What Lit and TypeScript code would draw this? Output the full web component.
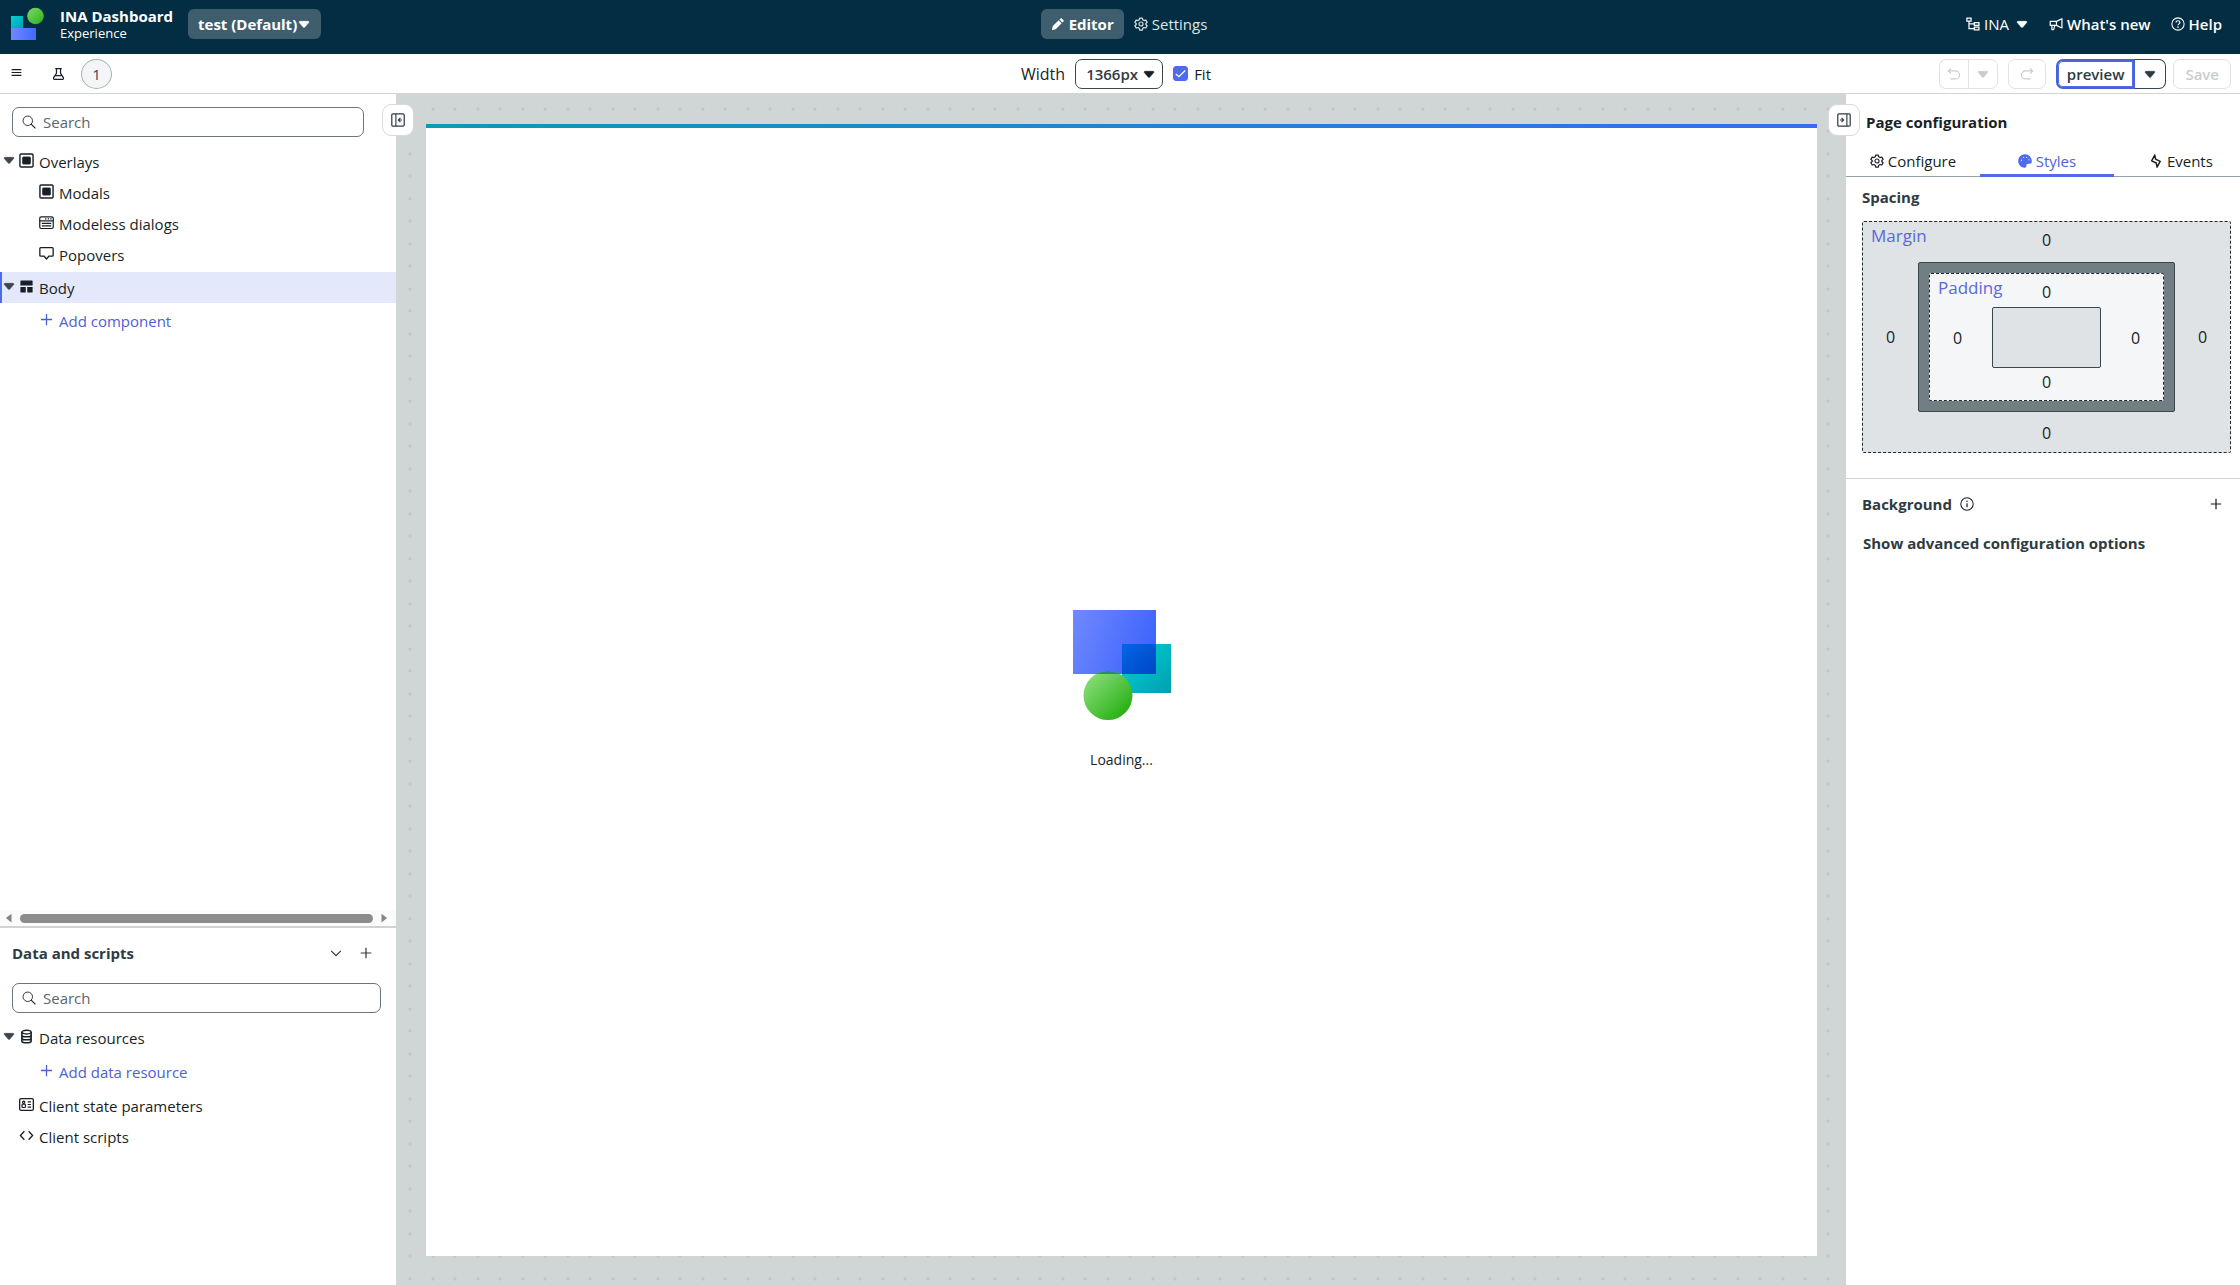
import { LitElement, html, css, svg, nothing } from "lit";
import { customElement, property, state } from "lit/decorators.js";
import { classMap } from "lit/directives/class-map.js";

const shapes: Record<string, unknown> = {
  caret: svg`<path d="M3.4 5h9.2c.8 0 1.200 .8.6 1.400L8.600 11.600a.8.8 0 0 1-1.200 0L2.800 6.400C2.200 5.800 2.600 5 3.400 5z" fill="currentColor"/>`,
  menu: svg`<path d="M2 4.500h12M2 8h12M2 11.500h12" stroke-width="1.500"/>`,
  flask: svg`<path d="M4 1.500h8M5.500 1.500v5.700L2 12.500c-.5.900 0 2 1 2h10c1 0 1.500-1.100 1-2L10.500 7.200V1.500M4 10h8" stroke-width="1.500"/>`,
  search: svg`<circle cx="6.600" cy="6.600" r="5.400"/><path d="M10.500 10.500l4.800 4.800" stroke-width="1.300"/>`,
  overlay: svg`<rect x="1" y="1" width="14" height="14" rx="1.200" stroke-width="1.500"/><rect x="4" y="4.300" width="8" height="7.400" rx=".6" fill="currentColor" stroke-width="1"/>`,
  dialog: svg`<rect x=".8" y="2" width="14.400" height="12.400" rx="1.500" stroke-width="1.300"/><path d="M1 6.300h14" stroke-width="1.300"/><path d="M6.500 4.200h1.400M9.300 4.200h1.400M12.100 4.200h1.400M3 9h10M3 11.700h10" stroke-width="1.300"/>`,
  popover: svg`<path d="M1.800 1.700h12.400c.5 0 .9.400.9.900v7.400c0 .5-.4.900-.9.900h-3.700L8 13.800 5.500 10.900H1.800c-.5 0-.9-.4-.9-.9V2.600c0-.5.400-.9.900-.9z" stroke-width="1.400"/>`,
  body: svg`<path d="M1.500 2.200c0-.5.300-.7.700-.7h11.600c.4 0 .7.300.7.700V7h-13zM1.500 8.600h5.700v5.900h-5c-.4 0-.7-.3-.7-.7zM8.800 8.600h5.700v5.200c0 .4-.3.700-.7.700h-5z" fill="currentColor" stroke="none"/>`,
  plus: svg`<path d="M8 2v12M2 8h12" stroke-width="1.400"/>`,
  chevron: svg`<path d="M2.500 5.500L8 11l5.500-5.500" stroke-width="1.400"/>`,
  database: svg`<ellipse cx="8" cy="3.300" rx="5" ry="2" stroke-width="1.400"/><path d="M3 3.300v9.400c0 1.100 2.200 2 5 2s5-.9 5-2V3.300M3 6.300c0 1.100 2.200 2 5 2s5-.9 5-2M3 9.500c0 1.100 2.200 2 5 2s5-.9 5-2" stroke-width="1.600"/>`,
  parameters: svg`<rect x=".7" y="1.800" width="14.600" height="12.400" rx="1.500" stroke-width="1.400"/><circle cx="5" cy="5.700" r="1.200" stroke-width="1.300"/><rect x="3.200" y="7.700" width="3.700" height="3.500" rx="1" stroke-width="1.300"/><path d="M9.300 5.300h3.500M9.300 8h3.500M9.300 10.800h3.500" stroke-width="1.300"/>`,
  code: svg`<path d="M5.700 3.500L1.500 8l4.200 4.500M10.300 3.500L14.500 8l-4.200 4.500" stroke-width="1.400"/>`,
  pencil: svg`<path d="M10.900 1.700c.4-.4 1-.4 1.400 0l2 2c.4.400.4 1 0 1.400l-1.200 1.200-3.400-3.400zM8.800 3.800l3.400 3.400-6.300 6.300c-.2.200-.4.300-.7.400l-3.500.9c-.4.100-.7-.2-.6-.6l.9-3.500c.1-.3.200-.5.400-.7z" fill="currentColor" stroke="none"/>`,
  gear: svg`<path d="M6.500 1.200h3l.5 2 1.500.9 2-.6 1.500 2.600L13.500 7.500v1.100l1.500 1.400-1.500 2.600-2-.6-1.500.9-.5 2h-3l-.5-2-1.500-.9-2 .6L1 10l1.500-1.400V7.500L1 6.100l1.500-2.600 2 .6L6 3.200z" stroke-width="1.400" stroke-linejoin="round"/><circle cx="8" cy="8" r="2.300" stroke-width="1.300"/>`,
  hierarchy: svg`<path d="M1 1.300h4.800v3.400H1zM9.500 6.300h5.300v3.200H9.500zM9.500 11.600h5.300v3.200H9.500zM3.400 4.700v8.500h6.100M3.400 7.900h6.100" stroke-width="1.400"/>`,
  megaphone: svg`<path d="M14.800 2v10.500L8.500 9.600H1.400V5h7.100zM8.500 5v4.600M3.300 9.600v4.800h2l1.400-4.800" stroke-width="1.400" stroke-linejoin="round"/>`,
  help: svg`<circle cx="8" cy="8" r="7" stroke-width="1.200"/><path d="M5.800 6.400c0-1.300 1-2.100 2.200-2.100s2.200.8 2.200 2c0 1.500-2.200 1.600-2.200 3.200" stroke-width="1.300"/><circle cx="8" cy="11.600" r=".9" fill="currentColor" stroke="none"/>`,
  info: svg`<circle cx="8" cy="8" r="7.100" stroke-width="1.200"/><path d="M8 7v4.600" stroke-width="1.400"/><circle cx="8" cy="4.800" r=".9" fill="currentColor" stroke="none"/>`,
  undo: svg`<path d="M4.600 1.500L1.500 4.500l3.100 3M1.800 4.500h8.100a4.500 4.500 0 0 1 0 9H4" stroke-width="1.300"/>`,
  redo: svg`<path d="M11.400 1.500l3.100 3-3.100 3M14.200 4.500H6.100a4.500 4.500 0 0 0 0 9H12" stroke-width="1.300"/>`,
  palette: svg`<path fill-rule="evenodd" d="M8 .4C3.600.4.200 3.900.200 8s3.300 7.700 7.400 7.700c1.400 0 2-.9 1.900-1.900-.1-1.500.6-2.600 2.200-2.600h1.900c1.300 0 2.200-1 2.200-2.600C15.800 4 12.400.4 8 .4zM3.900 7.700a.7.700 0 1 1 0-1.400.7.700 0 0 1 0 1.400zm2.500-3a.7.700 0 1 1 0-1.400.7.700 0 0 1 0 1.400zm3.500 0a.7.700 0 1 1 0-1.400.7.700 0 0 1 0 1.400zm2.600 2.600a.7.700 0 1 1 0-1.400.7.700 0 0 1 0 1.400z" fill="currentColor" stroke="none"/>`,
  bolt: svg`<path d="M6.600 1.200L3 7.800l5.300 2.500.9 4.700 3.600-6.600-5.300-2.500z" stroke-width="1.700" stroke-linejoin="round"/>`,
  collapse: svg`<rect x=".9" y=".9" width="14.200" height="14.200" rx="1.300" stroke-width="1.400"/><path d="M5.600 1v14" stroke-width="1.300"/><path d="M12.600 8H8.800M10.800 5.600L8.400 8l2.400 2.400" stroke-width="1.300"/>`,
  expand: svg`<rect x=".9" y=".9" width="14.200" height="14.200" rx="1.300" stroke-width="1.400"/><path d="M11.300 1v14" stroke-width="1.300"/><path d="M3.400 8h3.800M5.200 5.600L7.600 8l-2.400 2.400" stroke-width="1.300"/>`,
  check: svg`<path d="M3 8.500l3.300 3L13 4.800" stroke-width="1.300"/>`,
  left: svg`<path d="M12 1v14L3 8z" fill="currentColor" stroke="none"/>`,
  right: svg`<path d="M4 1v14l9-7z" fill="currentColor" stroke="none"/>`,
};

@customElement("ui-icon")
export class UiIcon extends LitElement {
  @property() name = "";

  static styles = css`
    :host {
      display: inline-flex;
      flex: none;
      width: 14px;
      height: 14px;
    }
    .glyph {
      width: 100%;
      height: 100%;
      overflow: visible;
    }
  `;

  render() {
    return html`<svg class="glyph" viewBox="0 0 16 16" fill="none" stroke="currentColor" aria-hidden="true">
      ${shapes[this.name]}
    </svg>`;
  }
}

interface Row {
  label: string;
  icon: string;
  level: 1 | 2;
  open?: boolean;
  selected?: boolean;
  action?: boolean;
  loose?: boolean;
}

const layoutRows: Row[] = [
  { label: "Overlays", icon: "overlay", level: 1, open: true },
  { label: "Modals", icon: "overlay", level: 2 },
  { label: "Modeless dialogs", icon: "dialog", level: 2 },
  { label: "Popovers", icon: "popover", level: 2 },
  { label: "Body", icon: "body", level: 1, open: true, selected: true, loose: true },
  { label: "Add component", icon: "plus", level: 2, action: true, loose: true },
];

const dataRows: Row[] = [
  { label: "Data resources", icon: "database", level: 1, open: true },
  { label: "Add data resource", icon: "plus", level: 2, action: true, loose: true },
  { label: "Client state parameters", icon: "parameters", level: 1, loose: true },
  { label: "Client scripts", icon: "code", level: 1 },
];

@customElement("app-root")
export class AppRoot extends LitElement {
  @state() private fit = true;
  @state() private tab = "Styles";

  static styles = css`
    :host {
      display: flex;
      flex-direction: column;
      min-height: 100vh;
      font: 15px/20px "Open Sans", "Noto Sans", sans-serif;
      color: #181f26;
      background: #fff;
    }
    *,
    *::before {
      box-sizing: border-box;
    }
    button,
    input,
    select {
      font: inherit;
      color: inherit;
      margin: 0;
    }
    button {
      display: inline-flex;
      align-items: center;
      padding: 0;
      border: 0;
      background: none;
      white-space: nowrap;
    }
    .caret {
      width: 14px;
      height: 14px;
    }

    .header {
      display: grid;
      grid-template-columns: minmax(0, 1fr) auto minmax(0, 1fr);
      align-items: center;
      height: 54px;
      padding-bottom: 6px;
      background: #032d42;
      color: #fff;
    }
    .brand {
      display: flex;
      align-items: center;
      gap: 15px;
      padding-left: 11px;
    }
    .logo {
      width: 34px;
      height: 34px;
    }
    .name {
      font-size: 15px;
      line-height: 18px;
      font-weight: 700;
      margin: 0;
    }
    .kind {
      font-size: 13px;
      line-height: 16px;
      margin: 0;
    }
    .pill {
      height: 30px;
      padding: 0 10px;
      border-radius: 6px;
      background: #3e5e6e;
      font-weight: 700;
    }
    .nav {
      display: flex;
      padding-left: 18px;
    }
    .nav .item,
    .account .item {
      gap: 4px;
      height: 30px;
    }
    .nav .plain {
      padding: 0 10px;
      color: #dfe5e8;
    }
    .item {
      display: inline-flex;
      align-items: center;
      color: #fff;
      text-decoration: none;
      white-space: nowrap;
    }
    .account {
      display: flex;
      justify-content: flex-end;
      gap: 20px;
      padding-right: 18px;
    }
    .account .caret {
      margin-left: 2px;
    }
    .strong {
      font-weight: 600;
    }

    .toolbar {
      display: grid;
      grid-template-columns: minmax(0, 1fr) auto minmax(0, 1fr);
      align-items: center;
      height: 40px;
      border-bottom: 1px solid #cfd5d7;
    }
    .tools {
      display: flex;
      align-items: center;
      padding-left: 10px;
    }
    .tools .menu {
      width: 13px;
      height: 13px;
      margin: 0 29px 2px 0;
    }
    .tools .flask {
      width: 13px;
      height: 14px;
      margin-right: 16px;
    }
    .count {
      justify-content: center;
      width: 31px;
      height: 30px;
      border: 1px solid #aab0b5;
      border-radius: 50%;
      background: #f4f5f7;
      color: #4b3a5c;
    }
    .viewport {
      display: flex;
      align-items: center;
      gap: 10px;
      padding-right: 8px;
      font-size: 16px;
    }
    .sizer {
      display: grid;
      align-items: center;
    }
    .sizer > * {
      grid-area: 1 / 1;
    }
    .sizer .caret {
      justify-self: end;
      margin-right: 7px;
      pointer-events: none;
    }
    .size {
      appearance: none;
      height: 30px;
      padding: 0 24px 0 10px;
      border: 1px solid #3c474d;
      border-radius: 7px;
      background: #fff;
      color: #2f3b41;
      font-size: 15px;
      font-weight: 600;
    }
    .fit {
      display: inline-flex;
      align-items: center;
      gap: 6px;
      font-size: 15px;
    }
    .tick {
      display: grid;
      width: 15px;
      height: 15px;
    }
    .tick > * {
      grid-area: 1 / 1;
    }
    .tick ui-icon {
      width: 15px;
      height: 15px;
      color: #fff;
      pointer-events: none;
    }
    .box {
      appearance: none;
      width: 15px;
      height: 15px;
      border: 1px solid #4f6bed;
      border-radius: 3px;
      background: #fff;
    }
    .box:checked {
      background: #4f6bed;
    }
    .actions {
      display: flex;
      justify-content: flex-end;
      padding-right: 9px;
    }
    .tool {
      justify-content: center;
      height: 30px;
      padding: 0 11px;
      border: 1px solid #3c474d;
      border-radius: 7px;
      color: #2f3b41;
      font-weight: 600;
    }
    .tool:disabled {
      border-color: #dfe2e4;
      color: #c8cdcf;
    }
    .tool.start {
      padding: 0 7px;
      border-radius: 7px 0 0 7px;
      border-right: 0;
    }
    .tool.end {
      padding: 0 7px;
      border-radius: 0 7px 7px 0;
      margin-right: 10px;
    }
    .tool.redo {
      margin-right: 10px;
    }
    .tool.primary {
      padding: 0 9px;
      border: 2px solid #4a62d8;
      box-shadow: inset 0 0 0 1px #4f6bed;
    }
    .tool.split {
      padding: 0 8px;
      border-left: 0;
      margin-right: 7px;
    }

    .workspace {
      flex: 1;
      display: grid;
      grid-template-columns: 396px minmax(0, 1fr) 394px;
      min-height: 0;
    }
    .side {
      position: relative;
      display: flex;
      flex-direction: column;
      min-width: 0;
      background: #fff;
    }
    .toggle {
      position: absolute;
      z-index: 1;
      top: 10px;
      justify-content: center;
      width: 32px;
      height: 32px;
      border: 1px solid #d6dadc;
      border-radius: 9px;
      background: #fff;
      color: #2f3b41;
    }
    .toggle.left {
      right: -18px;
    }
    .toggle.right {
      left: -18px;
    }
    .upper {
      flex: 7 1 0;
      display: flex;
      flex-direction: column;
      border-bottom: 2px solid #ced4d6;
    }
    .lower {
      flex: 3 1 0;
    }
    .search {
      display: flex;
      align-items: center;
      gap: 7px;
      height: 30px;
      margin: 13px 32px 9px 12px;
      padding: 0 9px;
      border: 1px solid #6b757a;
      border-radius: 7px;
    }
    .search.wide {
      margin-right: 15px;
    }
    .query {
      flex: 1;
      min-width: 0;
      padding: 0;
      border: 0;
      outline: 0;
      background: none;
    }
    .query::placeholder {
      color: #5c666c;
      opacity: 1;
    }
    .tree {
      flex: 1;
      margin: 0;
      padding: 0;
      list-style: none;
    }
    .row {
      display: flex;
      align-items: center;
      height: 31px;
      padding-left: 4px;
    }
    .row.loose {
      margin-top: 2px;
    }
    .lower .row.loose {
      margin-top: 3px;
    }
    .row.selected {
      background: #e3e8fa;
      box-shadow: inset 2px 0 #4f6bed;
    }
    .twist {
      width: 15px;
      height: 31px;
      color: #3c474d;
    }
    .twist .caret {
      margin: 0 0 3px -2px;
    }
    .node {
      gap: 5px;
      height: 31px;
    }
    .node ui-icon {
      width: 15px;
      height: 15px;
      margin-bottom: 3px;
    }
    .node.first {
      margin-left: 15px;
    }
    .node.nested {
      margin-left: 35px;
    }
    .node.action {
      color: #5060d4;
    }
    .scroller {
      display: flex;
      align-items: center;
      gap: 6px;
      height: 16px;
      padding: 0 7px 0 4px;
      background: #fbfbfb;
      color: #858585;
    }
    .scroller ui-icon {
      width: 10px;
      height: 10px;
    }
    .thumb {
      flex: 1;
      height: 9px;
      border-radius: 5px;
      background: #8b8b8b;
    }
    .heading {
      display: flex;
      align-items: center;
      gap: 16px;
      height: 42px;
      padding: 8px 23px 0 12px;
      color: #2f3b41;
    }
    .title {
      flex: 1;
      margin: 0;
      font-size: 15px;
      line-height: 20px;
      font-weight: 700;
    }

    .canvas {
      display: flex;
      padding: 30px 29px 29px 30px;
      background-color: #d0d6d6;
      background-image: radial-gradient(circle at 14px 15px, #c0c7c7 1px, transparent 2px),
        radial-gradient(circle at 37px 15px, #c0c7c7 1px, transparent 2px),
        radial-gradient(circle at 14px 37px, #c0c7c7 1px, transparent 2px),
        radial-gradient(circle at 37px 37px, #c0c7c7 1px, transparent 2px);
      background-size: 45px 45px;
    }
    .page {
      flex: 1;
      display: flex;
      flex-direction: column;
      background: #fff;
    }
    .progress {
      height: 4px;
      background: linear-gradient(90deg, #0c9caf, #3a6bf5);
    }
    .loading {
      flex: 1;
      display: flex;
      flex-direction: column;
      align-items: center;
      justify-content: center;
      gap: 30px;
      padding-bottom: 4px;
    }
    .loading .art {
      width: 98px;
      height: 110px;
    }
    .status {
      margin: 0;
      font-size: 14px;
    }

    .config .title {
      flex: none;
      padding: 18px 20px 9px;
    }
    .tabs {
      display: flex;
      overflow: hidden;
      height: 36px;
      box-shadow: inset 0 -1px #98a1a5;
    }
    .tab {
      flex: 0 0 34%;
      justify-content: center;
      gap: 4px;
      padding-top: 6px;
      border-bottom: 3px solid transparent;
    }
    .tab.current {
      color: #4f62d8;
      border-color: #4f6bed;
    }
    .tab.current ui-icon {
      color: #4f6bed;
    }
    .spacing {
      padding: 10px 9px 25px 16px;
      border-bottom: 1px solid #cfd5d7;
    }
    .caption {
      margin: 0;
      font-size: 15px;
      line-height: 20px;
      font-weight: 700;
      color: #2f3b41;
    }
    .spacing .caption {
      margin-bottom: 14px;
    }
    .ring {
      display: grid;
      grid-template-columns: 55px minmax(0, 1fr) 55px;
      font-size: 16px;
      border-radius: 2px;
    }
    .outer {
      grid-template-rows: 40px auto 40px;
      border: 1px dashed #1f282d;
      background: #dfe3e6;
    }
    .frame {
      grid-area: 2 / 2;
      padding: 10px;
      border: 1px solid #3c474d;
      border-radius: 2px;
      background: #717e84;
    }
    .inner {
      grid-template-rows: 33px 61px 32px;
      border: 1px dashed #1f282d;
      background: #f4f6f8;
    }
    .core {
      grid-area: 2 / 2;
      margin: 0 7px;
      border: 1px solid #3c474d;
      border-radius: 2px;
      background: #dfe3e6;
    }
    .side-name {
      grid-area: 1 / 1 / 2 / 3;
      padding: 2px 8px;
      font-size: 17px;
      line-height: 24px;
      color: #5b68d8;
    }
    .value {
      justify-content: center;
    }
    .value.top {
      grid-area: 1 / 2;
    }
    .value.right {
      grid-area: 2 / 3;
    }
    .value.bottom {
      grid-area: 3 / 2;
    }
    .value.left {
      grid-area: 2 / 1;
    }
    .outer > .value.top {
      padding-bottom: 4px;
    }
    .outer > .value.bottom {
      padding-top: 2px;
    }
    .inner > .value.top {
      padding-top: 2px;
    }
    .inner > .value.bottom {
      padding-bottom: 5px;
    }
    .section {
      display: flex;
      align-items: center;
      gap: 8px;
      padding: 15px 17px 15px 16px;
    }
    .section .add {
      margin-left: auto;
    }
    .advanced {
      margin: 4px 17px;
      font-weight: 700;
      color: #2f3b41;
    }
  `;

  private renderRow(row: Row) {
    return html`<li class=${classMap({ row: true, selected: !!row.selected, loose: !!row.loose })}>
      ${row.open
        ? html`<button class="twist" aria-label="Collapse ${row.label}">
            <ui-icon class="caret" name="caret"></ui-icon>
          </button>`
        : nothing}
      <button
        class=${classMap({
          node: true,
          nested: row.level === 2,
          first: row.level === 1 && !row.open,
          action: !!row.action,
        })}
      >
        <ui-icon name=${row.icon}></ui-icon>${row.label}
      </button>
    </li>`;
  }

  private renderValues(kind: string) {
    return ["top", "right", "bottom", "left"].map(
      (side) => html`<button class="value ${side}" aria-label="${kind} ${side}: 0">0</button>`
    );
  }

  private renderSearch(label: string, wide = false) {
    return html`<label class=${classMap({ search: true, wide })}>
      <ui-icon name="search"></ui-icon>
      <input class="query" type="search" placeholder="Search" aria-label=${label} />
    </label>`;
  }

  private renderHeader() {
    return html`<header class="header">
      <div class="brand">
        <svg class="logo" viewBox="0 0 34 34" aria-hidden="true">
          <defs>
            <linearGradient id="teal" x2="1" y2="1">
              <stop stop-color="#00d5d5" />
              <stop offset="1" stop-color="#009fb0" />
            </linearGradient>
            <linearGradient id="blue" x2="1">
              <stop stop-color="#7088ff" />
              <stop offset="1" stop-color="#4468ff" />
            </linearGradient>
            <linearGradient id="green" x2="1" y2="1">
              <stop stop-color="#80d96c" />
              <stop offset="1" stop-color="#29b115" />
            </linearGradient>
          </defs>
          <rect x="0" y="9" width="12" height="12" fill="url(#teal)" />
          <rect x="0" y="21" width="25" height="12" fill="url(#blue)" />
          <circle cx="24.500" cy="9" r="8.300" fill="url(#green)" />
        </svg>
        <div class="identity">
          <h1 class="name">INA Dashboard</h1>
          <p class="kind">Experience</p>
        </div>
        <button class="pill">test (Default)<ui-icon class="caret" name="caret"></ui-icon></button>
      </div>
      <nav class="nav">
        <a class="item pill" href="#editor"><ui-icon name="pencil"></ui-icon>Editor</a>
        <a class="item plain" href="#settings"><ui-icon name="gear"></ui-icon>Settings</a>
      </nav>
      <div class="account">
        <button class="item">
          <ui-icon name="hierarchy"></ui-icon>INA<ui-icon class="caret" name="caret"></ui-icon>
        </button>
        <a class="item strong" href="#news"><ui-icon name="megaphone"></ui-icon>What's new</a>
        <a class="item strong" href="#help"><ui-icon name="help"></ui-icon>Help</a>
      </div>
    </header>`;
  }

  private renderToolbar() {
    return html`<div class="toolbar">
      <div class="tools">
        <button aria-label="Menu"><ui-icon class="menu" name="menu"></ui-icon></button>
        <button aria-label="Experiments"><ui-icon class="flask" name="flask"></ui-icon></button>
        <button class="count">1</button>
      </div>
      <div class="viewport">
        <label for="size">Width</label>
        <div class="sizer">
          <select class="size" id="size">
            <option>1366px</option>
          </select>
          <ui-icon class="caret" name="caret"></ui-icon>
        </div>
        <label class="fit">
          <span class="tick">
            <input
              class="box"
              type="checkbox"
              .checked=${this.fit}
              @change=${(e: Event) => (this.fit = (e.target as HTMLInputElement).checked)}
            />
            ${this.fit ? html`<ui-icon name="check"></ui-icon>` : nothing}
          </span>
          Fit
        </label>
      </div>
      <div class="actions">
        <button class="tool start" disabled aria-label="Undo"><ui-icon name="undo"></ui-icon></button>
        <button class="tool end" disabled aria-label="Undo history">
          <ui-icon class="caret" name="caret"></ui-icon>
        </button>
        <button class="tool redo" disabled aria-label="Redo"><ui-icon name="redo"></ui-icon></button>
        <button class="tool start primary">preview</button>
        <button class="tool end split" aria-label="Preview options">
          <ui-icon class="caret" name="caret"></ui-icon>
        </button>
        <button class="tool" disabled>Save</button>
      </div>
    </div>`;
  }

  private renderLeft() {
    return html`<aside class="side">
      <button class="toggle left" aria-label="Collapse left panel"><ui-icon name="collapse"></ui-icon></button>
      <section class="upper">
        ${this.renderSearch("Search components")}
        <ul class="tree">
          ${layoutRows.map((row) => this.renderRow(row))}
        </ul>
        <div class="scroller">
          <ui-icon name="left"></ui-icon>
          <div class="thumb"></div>
          <ui-icon name="right"></ui-icon>
        </div>
      </section>
      <section class="lower">
        <div class="heading">
          <h2 class="title">Data and scripts</h2>
          <button aria-label="Collapse section"><ui-icon name="chevron"></ui-icon></button>
          <button aria-label="Add data or script"><ui-icon name="plus"></ui-icon></button>
        </div>
        ${this.renderSearch("Search data and scripts", true)}
        <ul class="tree">
          ${dataRows.map((row) => this.renderRow(row))}
        </ul>
      </section>
    </aside>`;
  }

  private renderCanvas() {
    return html`<main class="canvas">
      <div class="page">
        <div class="progress"></div>
        <div class="loading">
          <svg class="art" viewBox="0 0 98 110" aria-hidden="true">
            <defs>
              <linearGradient id="sheet" x2="1" y2=".3">
                <stop stop-color="#7089ff" />
                <stop offset="1" stop-color="#4066fb" />
              </linearGradient>
              <linearGradient id="tile" x2="1" y2="1">
                <stop stop-color="#00d2d8" />
                <stop offset="1" stop-color="#00a0ae" />
              </linearGradient>
              <linearGradient id="overlap" x2="1" y2="1">
                <stop stop-color="#0066e6" />
                <stop offset="1" stop-color="#0046c4" />
              </linearGradient>
              <linearGradient id="ball" x1=".15" y1=".15" x2=".85" y2=".85">
                <stop stop-color="#84da74" />
                <stop offset="1" stop-color="#29b115" />
              </linearGradient>
              <clipPath id="edge"><rect width="83" height="64" /></clipPath>
            </defs>
            <rect width="83" height="64" fill="url(#sheet)" />
            <rect x="49" y="34" width="49" height="49" fill="url(#tile)" />
            <rect x="49" y="34" width="34" height="30" fill="url(#overlap)" />
            <circle cx="35" cy="85.500" r="24.500" fill="url(#ball)" />
            <circle cx="35" cy="85.500" r="24.500" fill="#2a8a70" clip-path="url(#edge)" />
          </svg>
          <p class="status">Loading...</p>
        </div>
      </div>
    </main>`;
  }

  private renderRight() {
    const tabs = [
      ["Configure", "gear"],
      ["Styles", "palette"],
      ["Events", "bolt"],
    ];
    return html`<aside class="side config">
      <button class="toggle right" aria-label="Collapse right panel"><ui-icon name="expand"></ui-icon></button>
      <h2 class="title">Page configuration</h2>
      <div class="tabs" role="tablist">
        ${tabs.map(
          ([label, icon]) => html`<button
            class=${classMap({ tab: true, current: label === this.tab })}
            role="tab"
            aria-selected=${label === this.tab ? "true" : "false"}
            @click=${() => (this.tab = label)}
          >
            <ui-icon name=${icon}></ui-icon>${label}
          </button>`
        )}
      </div>
      <section class="spacing">
        <h3 class="caption">Spacing</h3>
        <div class="ring outer">
          <span class="side-name">Margin</span>
          ${this.renderValues("Margin")}
          <div class="frame">
            <div class="ring inner">
              <span class="side-name">Padding</span>
              ${this.renderValues("Padding")}
              <div class="core"></div>
            </div>
          </div>
        </div>
      </section>
      <div class="section">
        <h3 class="caption">Background</h3>
        <ui-icon name="info"></ui-icon>
        <button class="add" aria-label="Add background"><ui-icon name="plus"></ui-icon></button>
      </div>
      <button class="advanced">Show advanced configuration options</button>
    </aside>`;
  }

  render() {
    return html`
      ${this.renderHeader()} ${this.renderToolbar()}
      <div class="workspace">${this.renderLeft()} ${this.renderCanvas()} ${this.renderRight()}</div>
    `;
  }
}
